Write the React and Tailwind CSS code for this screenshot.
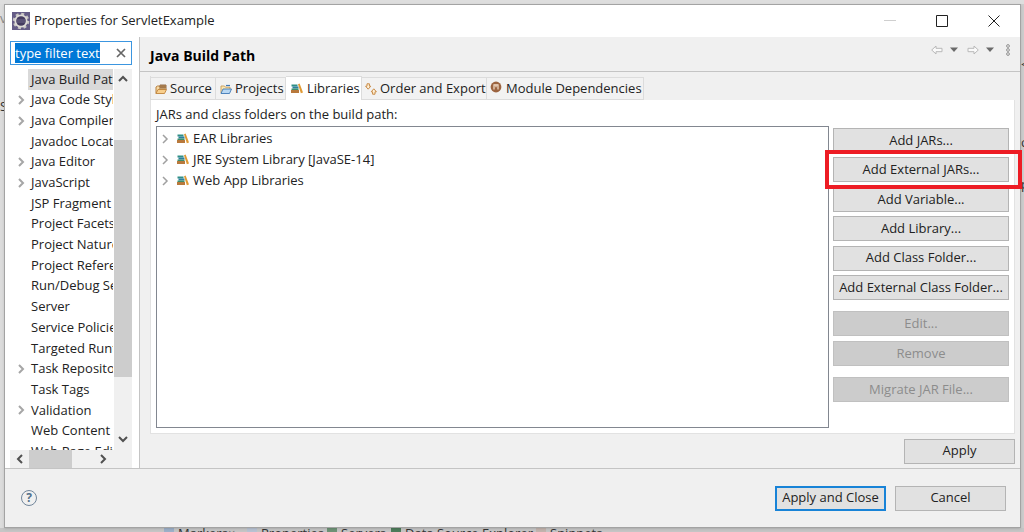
import { useEffect, useRef } from "react";
import { clsx } from "clsx";

const CATEGORIES = [
  { name: "Java Build Path", selected: true },
  { name: "Java Code Style", children: true },
  { name: "Java Compiler", children: true },
  { name: "Javadoc Location" },
  { name: "Java Editor", children: true },
  { name: "JavaScript", children: true },
  { name: "JSP Fragment" },
  { name: "Project Facets" },
  { name: "Project Natures" },
  { name: "Project References" },
  { name: "Run/Debug Settings" },
  { name: "Server" },
  { name: "Service Policies" },
  { name: "Targeted Runtimes" },
  { name: "Task Repository", children: true },
  { name: "Task Tags" },
  { name: "Validation", children: true },
  { name: "Web Content Settings" },
  { name: "Web Page Editor" },
];

const LIBRARIES = ["EAR Libraries", "JRE System Library [JavaSE-14]", "Web App Libraries"];

function Chevron({ className, d = "M3 1l4 4-4 4", width = 1.6 }) {
  return (
    <svg viewBox="0 0 10 10" className={className} fill="none" stroke="currentColor" strokeWidth={width}>
      <path d={d} />
    </svg>
  );
}

function EclipseIcon() {
  return (
    <svg viewBox="0 0 18 18" className="size-[18px] shrink-0">
      <rect width="18" height="18" fill="#655c86" />
      <circle cx="9" cy="9" r="7" fill="none" stroke="#c9c7c4" strokeWidth="2.6" strokeDasharray="2.9 2.6" />
      <circle cx="9" cy="9" r="6.6" fill="#dedbd6" />
      <circle cx="9" cy="9" r="4.8" fill="#453c60" />
      <path d="M4.8 8h8.4M4.8 10h8.4" stroke="#7a7196" strokeWidth="0.8" />
    </svg>
  );
}

function LibraryIcon() {
  return (
    <svg viewBox="0 0 12 11" className="h-[11px] w-3 shrink-0">
      <path d="M0.5 1.5h6v2h-6z" fill="#2f8f86" />
      <path d="M1.5 3.5h6v2h-6z" fill="#2d7f9e" />
      <path d="M0.5 5.5h7v1.5h-7z" fill="#3c8f6c" />
      <path d="M0 7h8v3H0z" fill="#b8793c" />
      <path d="M7 1.2l1.6-.7L12 9.4l-2.2.8z" fill="#e09a35" />
    </svg>
  );
}

function SourceIcon() {
  return (
    <svg viewBox="0 0 12 11" className="h-[11px] w-3 shrink-0">
      <path d="M1 9.5V3l1.5-1h2l1 1h1" fill="#f6d9a4" stroke="#b9803f" />
      <path d="M5 1h6v4.5H5z" fill="#f0cf9c" stroke="#7a4a1f" strokeWidth="0.8" />
      <path d="M7 1v4.5M9 1v4.5M5 3h6" stroke="#7a4a1f" strokeWidth="0.8" />
      <path d="M1 9.5l2-4h8.5l-2 4z" fill="#f8cf8d" stroke="#c1843c" strokeWidth="0.9" />
    </svg>
  );
}

function ProjectsIcon() {
  return (
    <svg viewBox="0 0 12 11" className="h-[11px] w-3 shrink-0">
      <path d="M1 9V2h3.5l1 1.2H10v2" fill="#fbe7b4" stroke="#c69b55" strokeWidth="0.9" />
      <path d="M1 9.5l2-4.5h8.5l-2 4.5z" fill="#b9d8f3" stroke="#3f78b5" strokeWidth="0.9" />
      <path d="M6 1.5h4" stroke="#3f78b5" strokeWidth="1.2" />
    </svg>
  );
}

function OrderIcon() {
  return (
    <svg viewBox="0 0 12 12" className="size-3 shrink-0" fill="#fff3dc" stroke="#c98a45" strokeWidth="1">
      <path d="M2 .8h2.4v2.4h1.4L3.2 6.2.6 3.2H2z" />
      <path d="M7.6 11.2H10V8.8h1.4L8.8 5.8 6.2 8.8h1.4z" />
    </svg>
  );
}

function ModuleIcon() {
  return (
    <svg viewBox="0 0 12 12" className="mb-1 size-3 shrink-0">
      <circle cx="6" cy="6" r="5.4" fill="#9c6440" />
      <path d="M4 8.6V3.8h4v4.8M6 3.8v2.4" fill="none" stroke="#f3dfcb" strokeWidth="1.2" />
    </svg>
  );
}

const TABS = [
  { name: "Source", icon: SourceIcon, className: "w-[65px] gap-[3px] pl-1" },
  { name: "Projects", icon: ProjectsIcon, className: "w-[70px] gap-[3px] pl-1" },
  { name: "Libraries", icon: LibraryIcon, className: "w-[76px] gap-1 pl-[5px]", active: true },
  { name: "Order and Export", icon: OrderIcon, className: "w-[125px] gap-[3px] pl-[3px]" },
  { name: "Module Dependencies", icon: ModuleIcon, className: "w-[157px] gap-1 pl-[3px]" },
];

function Button({ children, className, primary, disabled }) {
  return (
    <button
      type="button"
      disabled={disabled}
      className={clsx(
        "flex h-[25px] shrink-0 items-center justify-center whitespace-nowrap",
        primary ? "border-2 border-[#1883d7]" : "border",
        disabled ? "border-[#c0c0c0] bg-[#cccccc] text-[#8c8c8c]" : "bg-[#e1e1e1]",
        !primary && !disabled && "border-[#b4b4b4]",
        className
      )}
    >
      {children}
    </button>
  );
}

function TitleBar() {
  return (
    <header className="flex h-8 shrink-0 items-center bg-white pl-[7px]">
      <EclipseIcon />
      <h1 className="flex-1 pl-1 text-[13px]">Properties for ServletExample</h1>
      <button type="button" aria-label="Minimize" disabled className="flex w-13 justify-center text-[#cfcfcf]">
        <svg viewBox="0 0 12 12" className="size-3" stroke="currentColor"><path d="M0 5.5h12" /></svg>
      </button>
      <button type="button" aria-label="Maximize" className="flex w-13 justify-center">
        <svg viewBox="0 0 12 12" className="size-3" fill="none" stroke="currentColor"><path d="M.5.5h11v11H.5z" /></svg>
      </button>
      <button type="button" aria-label="Close" className="flex w-13 justify-center">
        <svg viewBox="0 0 12 12" className="size-3" stroke="currentColor"><path d="M.5.5l11 11M11.5.5l-11 11" /></svg>
      </button>
    </header>
  );
}

function FilterBox() {
  const inputRef = useRef(null);

  useEffect(() => {
    inputRef.current.focus();
    inputRef.current.select();
  }, []);

  return (
    <div className="flex h-6 w-[122px] shrink-0 items-center border border-[#3c96e0] bg-white pl-1">
      <input
        ref={inputRef}
        type="text"
        aria-label="Filter"
        defaultValue="type filter text"
        className="h-5 w-24 min-w-0 text-[13px] leading-5 outline-none selection:bg-[#0078d7] selection:text-white"
      />
      <button type="button" aria-label="Clear filter" className="flex flex-1 items-center justify-center">
        <svg viewBox="0 0 10 10" className="size-[10px]" stroke="#666" strokeWidth="1.7"><path d="M1 1l8 8M9 1L1 9" /></svg>
      </button>
    </div>
  );
}

function Sidebar() {
  return (
    <nav className="flex w-[135px] shrink-0 flex-col border-r border-[#c4c4c4] bg-white pt-1 pl-[5px]">
      <FilterBox />
      <div className="mt-1 flex min-h-0 flex-1">
        <div className="w-[103px] overflow-hidden">
          <ul className="flex h-[393px] flex-col">
            {CATEGORIES.map((item) => (
              <li key={item.name} className="flex flex-1 items-center">
                <span className="flex w-[18px] shrink-0 justify-center pl-1 text-[#a6a6a6]">
                  {item.children && <Chevron className="size-[10px]" width={2} />}
                </span>
                <a
                  href="#category"
                  className={clsx(
                    "flex h-full flex-1 items-center pl-[3px] whitespace-nowrap",
                    item.selected && "bg-[#d9d9d9]"
                  )}
                >
                  {item.name}
                </a>
              </li>
            ))}
          </ul>
        </div>
        <div className="ml-px flex w-[18px] flex-col items-center bg-[#f0f0f0] text-[#505050]">
          <div className="flex h-5 items-center">
            <Chevron className="size-[10px]" d="M1 7l4-4 4 4" width={2} />
          </div>
          <div className="mt-[51px] w-full flex-1 bg-[#cdcdcd]" />
          <div className="flex h-[73px] items-end pb-[6px]">
            <Chevron className="size-[10px]" d="M1 3l4 4 4-4" width={2} />
          </div>
        </div>
      </div>
      <div className="flex h-[18px] w-[122px] shrink-0 items-center bg-[#f0f0f0] text-[#505050]">
        <div className="flex w-[19px] justify-center">
          <Chevron className="size-[10px]" d="M7 1L3 5l4 4" width={2} />
        </div>
        <div className="h-full w-[43px] bg-[#cdcdcd]" />
        <div className="flex w-[42px] justify-end pr-1.5">
          <Chevron className="size-[10px]" width={2} />
        </div>
      </div>
    </nav>
  );
}

function NavToolbar() {
  return (
    <div className="flex items-center text-[#6a6a6a]">
      <button type="button" aria-label="Back">
        <svg viewBox="0 0 12 10" className="h-[10px] w-3" fill="#fafafa" stroke="#b8b8b8"><path d="M.7 5L5 1v2.3h6v3.4H5V9z" /></svg>
      </button>
      <button type="button" aria-label="Back history" className="pl-[6px]">
        <svg viewBox="0 0 10 6" className="h-[6px] w-[10px]" fill="currentColor"><path d="M1 .5h8L5 5z" /></svg>
      </button>
      <button type="button" aria-label="Forward" className="pl-2">
        <svg viewBox="0 0 12 10" className="h-[10px] w-3" fill="#fafafa" stroke="#b8b8b8"><path d="M11.3 5L7 1v2.3H1v3.4h6V9z" /></svg>
      </button>
      <button type="button" aria-label="Forward history" className="pl-[6px]">
        <svg viewBox="0 0 10 6" className="h-[6px] w-[10px]" fill="currentColor"><path d="M1 .5h8L5 5z" /></svg>
      </button>
      <button type="button" aria-label="View menu" className="pl-[10px]">
        <svg viewBox="0 0 6 12" className="h-3 w-[6px]" fill="none" stroke="#888" strokeWidth="0.9">
          <circle cx="3" cy="2" r="1.4" /><circle cx="3" cy="6" r="1.4" /><circle cx="3" cy="10" r="1.4" />
        </svg>
      </button>
    </div>
  );
}

function Tabs() {
  return (
    <div role="tablist" className="flex h-6 shrink-0 items-end border-l border-[#dcdcdc]">
      {TABS.map(({ name, icon: Icon, className, active }) => (
        <button
          key={name}
          type="button"
          role="tab"
          aria-selected={!!active}
          className={clsx(
            "flex items-center border-t border-r border-[#dcdcdc] whitespace-nowrap",
            className,
            active ? "h-6 bg-white" : "h-[23px] border-b bg-[#f2f2f2] pt-px"
          )}
        >
          <Icon />
          {name}
        </button>
      ))}
    </div>
  );
}

function LibrariesPanel() {
  return (
    <section className="flex min-h-0 flex-1 flex-col border border-t-0 border-[#e2e2e2] bg-white p-[5px] pt-1">
      <p className="h-[22px] shrink-0 leading-5">JARs and class folders on the build path:</p>
      <div className="flex min-h-0 flex-1 gap-1">
        <ul className="flex-1 border border-[#828790] py-px">
          {LIBRARIES.map((name) => (
            <li key={name} className="flex h-[21px] items-center">
              <Chevron className="ml-[3px] size-[10px] text-[#a0a0a0]" width={1.5} />
              <span className="flex items-center gap-1 pl-[7px]">
                <LibraryIcon />
                {name}
              </span>
            </li>
          ))}
        </ul>
        <div className="flex w-44 flex-col gap-[11px] pt-0.5">
          <div className="flex h-[172px] flex-col justify-between">
            <Button>Add JARs...</Button>
            <div className="relative">
              <Button className="w-full">Add External JARs...</Button>
              <div className="pointer-events-none absolute -inset-y-[7px] -right-[13px] -left-2 z-10 border-4 border-[#ed1c24]" />
            </div>
            <Button>Add Variable...</Button>
            <Button>Add Library...</Button>
            <Button>Add Class Folder...</Button>
            <Button>Add External Class Folder...</Button>
          </div>
          <div className="flex flex-col gap-[5px]">
            <Button disabled>Edit...</Button>
            <Button disabled>Remove</Button>
          </div>
          <Button disabled>Migrate JAR File...</Button>
        </div>
      </div>
    </section>
  );
}

function PropertiesDialog() {
  return (
    <main className="z-10 flex min-h-0 min-w-0 flex-col border border-[#a3a3a3] bg-[#f0f0f0] shadow">
      <TitleBar />
      <div className="flex min-h-0 flex-1">
        <Sidebar />
        <div className="flex min-w-0 flex-1 flex-col">
          <div className="flex h-[35px] shrink-0 items-center justify-between border-b border-[#c4c4c4] pr-[9px] pl-[10px]">
            <h2 className="pt-1 text-sm font-bold text-black">Java Build Path</h2>
            <div className="pb-2">
              <NavToolbar />
            </div>
          </div>
          <div className="flex min-h-0 flex-1 flex-col pt-1 pr-[5px] pl-[10px]">
            <Tabs />
            <LibrariesPanel />
            <div className="flex h-[34px] shrink-0 items-center justify-end">
              <Button className="w-[111px]">Apply</Button>
            </div>
          </div>
        </div>
      </div>
      <footer className="flex h-[59px] shrink-0 items-center justify-end gap-[9px] border-t border-[#c4c4c4] pr-[14px] pl-4">
        <button type="button" aria-label="Help" className="mr-auto flex size-4 items-center justify-center rounded-full border border-[#71869b] text-[12px] leading-none font-bold text-[#53708c]">
          ?
        </button>
        <Button primary className="w-[111px]">Apply and Close</Button>
        <Button className="w-[111px]">Cancel</Button>
      </footer>
    </main>
  );
}

// Slivers of the workbench that stay visible around the dialog
function WorkbenchLeft() {
  return (
    <div className="flex flex-col items-start overflow-hidden bg-[#dcdcdc] pt-1 leading-5">
      <span className="text-[#888]">vi</span>
      <span className="pt-[68px] text-[#333]">S</span>
    </div>
  );
}

function WorkbenchRight() {
  return (
    <div className="flex flex-col items-start overflow-hidden bg-[#cdcdcd] pt-[50px] leading-5 text-[#333]">
      <span>&lt;</span>
      <span className="pt-[58px]">c</span>
      <span className="pt-[22px]">p</span>
    </div>
  );
}

function WorkbenchTabs() {
  return (
    <div className="col-span-3 flex overflow-hidden bg-[#c6c6c6] pl-[164px] text-[#333]">
      <div className="flex items-start leading-[10px] whitespace-nowrap">
        <span className="mr-1 h-2 w-[10px] bg-[#9db0c9]" />
        <span className="w-[50px]">Markers</span>
        <span className="w-[19px] text-[#777]">×</span>
        <span className="mr-1 h-2 w-[10px] bg-[#b9c3d3]" />
        <span className="w-[66px]">Properties</span>
        <span className="mr-1 h-2 w-[10px] bg-[#6f9377]" />
        <span className="w-[50px]">Servers</span>
        <span className="mr-1 h-2 w-[10px] bg-[#4f7d5c]" />
        <span className="w-[131px]">Data Source Explorer</span>
        <span className="mr-1 h-2 w-[10px] bg-[#c3b4ae]" />
        <span>Snippets</span>
      </div>
    </div>
  );
}

export default function App() {
  return (
    <div className="grid h-screen grid-cols-[4px_minmax(0,1fr)_3px] grid-rows-[4px_minmax(0,1fr)_4px] overflow-hidden bg-[#d6d6d6] font-['Open_Sans','Noto_Sans',sans-serif] text-[13px] text-[#222]">
      <div className="col-span-3 bg-[#dedede]" />
      <WorkbenchLeft />
      <PropertiesDialog />
      <WorkbenchRight />
      <WorkbenchTabs />
    </div>
  );
}
